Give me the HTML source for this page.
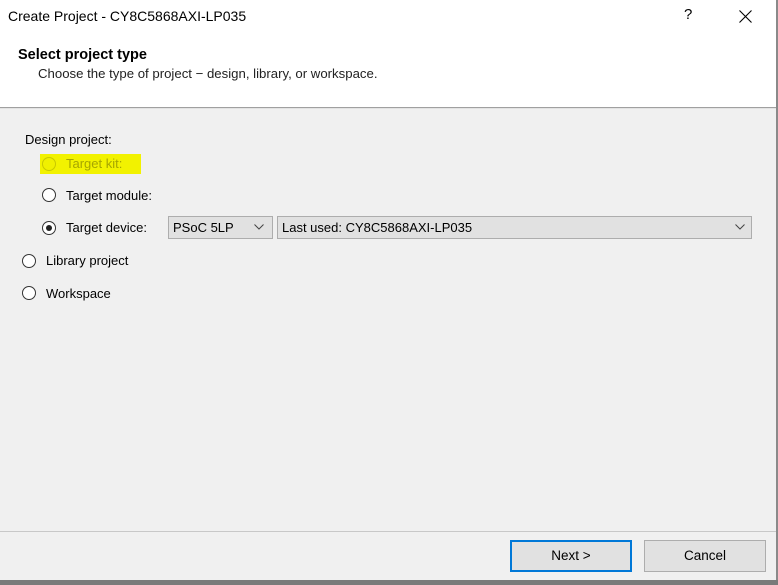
<!DOCTYPE html>
<html><head><style>
*{margin:0;padding:0;box-sizing:border-box}
body{width:778px;height:585px;background:#f0f0f0;font-family:"Liberation Sans",sans-serif;font-size:13px;color:#000;position:relative;overflow:hidden}
.a{position:absolute;white-space:nowrap}
.r{position:absolute;width:14px;height:14px;border:1px solid #333;border-radius:50%;background:#fff}
.sel{position:absolute;height:23px;border:1px solid #adadad;background:#e1e1e1;padding:3px 4px;font-size:13px}
.btn{position:absolute;height:32px;border:1px solid #adadad;background:#e1e1e1;text-align:center;line-height:30px;font-size:13.5px}
</style></head><body>
<div class="a" style="left:0;top:0;width:776px;height:107px;background:#fff"></div>
<div class="a" style="left:0;top:107px;width:776px;height:1px;background:#a0a0a0"></div>
<div class="a" style="left:0;top:108px;width:776px;height:1px;background:#e3e3e3"></div>
<div class="a" style="left:776px;top:0;width:2px;height:585px;background:#8a8a8a"></div>
<div class="a" style="left:8px;top:8px;font-size:14px">Create Project - CY8C5868AXI-LP035</div>
<div class="a" style="left:684px;top:6px;font-size:15px">?</div>
<svg class="a" style="left:739px;top:10px" width="13" height="13"><path d="M0.5 0.5L12.5 12.5M12.5 0.5L0.5 12.5" stroke="#000" stroke-width="1.1"/></svg>
<div class="a" style="left:18px;top:47px;font-weight:bold;font-size:14.5px">Select project type</div>
<div class="a" style="left:38px;top:66px;color:#222;font-size:13.2px">Choose the type of project − design, library, or workspace.</div>
<div class="a" style="left:25px;top:132px">Design project:</div>
<div class="a" style="left:40px;top:154px;width:101px;height:20px;background:#f2f200"></div>
<div class="r" style="left:42px;top:157px;border-color:#c8c800;background:#f0f000"></div>
<div class="a" style="left:66px;top:156px;color:#a6a600">Target kit:</div>
<div class="r" style="left:42px;top:188px"></div>
<div class="a" style="left:66px;top:188px">Target module:</div>
<div class="r" style="left:42px;top:221px"><div style="position:absolute;left:3px;top:3px;width:6px;height:6px;border-radius:50%;background:#222"></div></div>
<div class="a" style="left:66px;top:220px">Target device:</div>
<div class="sel" style="left:168px;top:216px;width:105px">PSoC 5LP</div>
<svg class="a" style="left:254px;top:224px" width="10" height="6"><path d="M0.5 0.5L5 5L9.5 0.5" stroke="#444" fill="none"/></svg>
<div class="sel" style="left:277px;top:216px;width:475px">Last used: CY8C5868AXI-LP035</div>
<svg class="a" style="left:735px;top:224px" width="10" height="6"><path d="M0.5 0.5L5 5L9.5 0.5" stroke="#444" fill="none"/></svg>
<div class="r" style="left:22px;top:254px"></div>
<div class="a" style="left:46px;top:253px">Library project</div>
<div class="r" style="left:22px;top:286px"></div>
<div class="a" style="left:46px;top:286px">Workspace</div>
<div class="a" style="left:0;top:531px;width:776px;height:1px;background:#c8c8c8"></div>
<div class="btn" style="left:510px;top:540px;width:122px;border:2px solid #0078d7;line-height:28px">Next &gt;</div>
<div class="btn" style="left:644px;top:540px;width:122px">Cancel</div>
<div class="a" style="left:0;top:580px;width:778px;height:5px;background:#7a7a7a"></div>
</body></html>
